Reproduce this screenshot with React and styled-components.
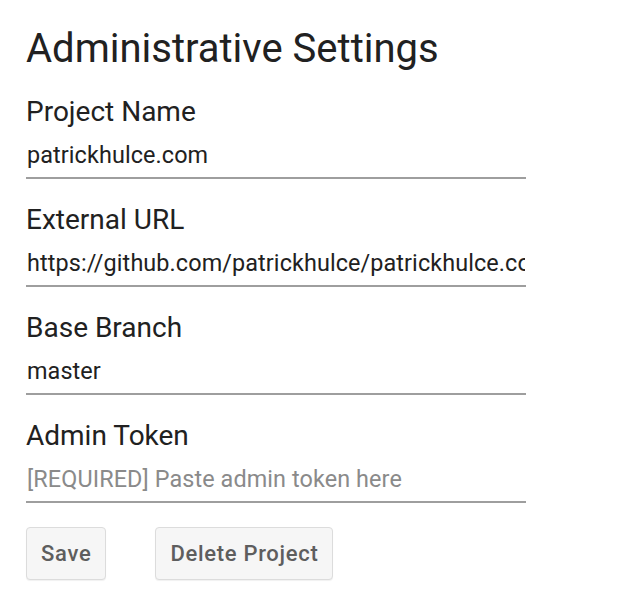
import React from 'react';
import styled, {createGlobalStyle} from "styled-components";

const GlobalStyle = createGlobalStyle`
    body {
        margin: 0;
        background: #fff;
        font-family: Roboto, "Noto Sans", sans-serif;
        color: #212121;
    }
`;

const Page = styled.div`
    padding: 25px 26px;
    width: 500px;
`;
const Title = styled.h1`
    margin: 0 0 22px;
    font-size: 40px;
    font-weight: 400;
    line-height: 48px;
`;
const Field = styled.label`
    display: block;
    margin-bottom: 24px;
`;
const Label = styled.div`
    font-size: 28px;
    line-height: 34px;
`;
const Input = styled.input`
    display: block;
    box-sizing: border-box;
    width: 100%;
    height: 50px;
    padding: 4px 1px 0;
    border: 0;
    border-bottom: 2px solid #9e9e9e;
    outline: none;
    background: transparent;
    font-family: inherit;
    font-size: 23.4px;
    letter-spacing: 0.1px;
    color: #212121;

    &::placeholder {
        color: #8a8a8a;
    }
`;
const Actions = styled.div`
    display: flex;
    gap: 49px;
    margin-top: 3px;
`;
const Button = styled.button`
    height: 53px;
    padding: 0 14px;
    border: 1px solid #dcdcdc;
    border-radius: 4px;
    background: #f6f6f6;
    box-shadow: 0 1px 1px rgba(0,0,0,0.06);
    font-family: inherit;
    font-size: 22px;
    font-weight: 500;
    letter-spacing: 0.7px;
    color: #5e5e5e;
`;

const fields = [
    {name: 'Project Name', value: 'patrickhulce.com'},
    {name: 'External URL', value: 'https://github.com/patrickhulce/patrickhulce.com'},
    {name: 'Base Branch', value: 'master'},
    {name: 'Admin Token', value: '', placeholder: '[REQUIRED] Paste admin token here'},
];

const App = () => {
    return (
        <Page>
            <GlobalStyle/>
            <Title>Administrative Settings</Title>
            {fields.map(field => (
                <Field key={field.name}>
                    <Label>{field.name}</Label>
                    <Input defaultValue={field.value} placeholder={field.placeholder}/>
                </Field>
            ))}
            <Actions>
                <Button>Save</Button>
                <Button>Delete Project</Button>
            </Actions>
        </Page>
    );
};

export default App;
